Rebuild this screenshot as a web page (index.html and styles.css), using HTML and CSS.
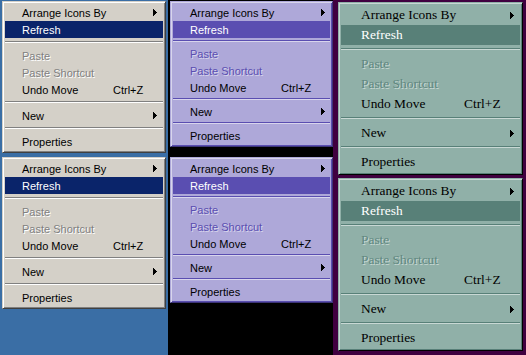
FILE: index.html
```html
<!DOCTYPE html>
<html>
<head>
<meta charset="utf-8">
<link rel="stylesheet" href="styles.css">
</head>
<body>
<div class="desk">
  <div class="col col-std">
    <div class="menu">
      <div class="item"><span class="lbl">Arrange Icons By</span><svg class="arrow" width="4" height="7" viewBox="0 0 4 7"><path d="M0 0h1v7H0zM1 1h1v5H1zM2 2h1v3H2zM3 3h1v1H3z"/></svg></div>
      <div class="item hl"><span class="lbl">Refresh</span></div>
      <div class="sep"></div>
      <div class="item dis"><span class="lbl">Paste</span></div>
      <div class="item dis"><span class="lbl">Paste Shortcut</span></div>
      <div class="item"><span class="lbl">Undo Move</span><span class="key">Ctrl+Z</span></div>
      <div class="sep"></div>
      <div class="item"><span class="lbl">New</span><svg class="arrow" width="4" height="7" viewBox="0 0 4 7"><path d="M0 0h1v7H0zM1 1h1v5H1zM2 2h1v3H2zM3 3h1v1H3z"/></svg></div>
      <div class="sep"></div>
      <div class="item"><span class="lbl">Properties</span></div>
    </div>
    <div class="menu">
      <div class="item"><span class="lbl">Arrange Icons By</span><svg class="arrow" width="4" height="7" viewBox="0 0 4 7"><path d="M0 0h1v7H0zM1 1h1v5H1zM2 2h1v3H2zM3 3h1v1H3z"/></svg></div>
      <div class="item hl"><span class="lbl">Refresh</span></div>
      <div class="sep"></div>
      <div class="item dis"><span class="lbl">Paste</span></div>
      <div class="item dis"><span class="lbl">Paste Shortcut</span></div>
      <div class="item"><span class="lbl">Undo Move</span><span class="key">Ctrl+Z</span></div>
      <div class="sep"></div>
      <div class="item"><span class="lbl">New</span><svg class="arrow" width="4" height="7" viewBox="0 0 4 7"><path d="M0 0h1v7H0zM1 1h1v5H1zM2 2h1v3H2zM3 3h1v1H3z"/></svg></div>
      <div class="sep"></div>
      <div class="item"><span class="lbl">Properties</span></div>
    </div>
  </div>
  <div class="col col-lilac">
    <div class="menu">
      <div class="item"><span class="lbl">Arrange Icons By</span><svg class="arrow" width="4" height="7" viewBox="0 0 4 7"><path d="M0 0h1v7H0zM1 1h1v5H1zM2 2h1v3H2zM3 3h1v1H3z"/></svg></div>
      <div class="item hl"><span class="lbl">Refresh</span></div>
      <div class="sep"></div>
      <div class="item dis"><span class="lbl">Paste</span></div>
      <div class="item dis"><span class="lbl">Paste Shortcut</span></div>
      <div class="item"><span class="lbl">Undo Move</span><span class="key">Ctrl+Z</span></div>
      <div class="sep"></div>
      <div class="item"><span class="lbl">New</span><svg class="arrow" width="4" height="7" viewBox="0 0 4 7"><path d="M0 0h1v7H0zM1 1h1v5H1zM2 2h1v3H2zM3 3h1v1H3z"/></svg></div>
      <div class="sep"></div>
      <div class="item"><span class="lbl">Properties</span></div>
    </div>
    <div class="menu">
      <div class="item"><span class="lbl">Arrange Icons By</span><svg class="arrow" width="4" height="7" viewBox="0 0 4 7"><path d="M0 0h1v7H0zM1 1h1v5H1zM2 2h1v3H2zM3 3h1v1H3z"/></svg></div>
      <div class="item hl"><span class="lbl">Refresh</span></div>
      <div class="sep"></div>
      <div class="item dis"><span class="lbl">Paste</span></div>
      <div class="item dis"><span class="lbl">Paste Shortcut</span></div>
      <div class="item"><span class="lbl">Undo Move</span><span class="key">Ctrl+Z</span></div>
      <div class="sep"></div>
      <div class="item"><span class="lbl">New</span><svg class="arrow" width="4" height="7" viewBox="0 0 4 7"><path d="M0 0h1v7H0zM1 1h1v5H1zM2 2h1v3H2zM3 3h1v1H3z"/></svg></div>
      <div class="sep"></div>
      <div class="item"><span class="lbl">Properties</span></div>
    </div>
  </div>
  <div class="col col-egg">
    <div class="menu">
      <div class="item"><span class="lbl">Arrange Icons By</span><svg class="arrow" width="4" height="7" viewBox="0 0 4 7"><path d="M0 0h1v7H0zM1 1h1v5H1zM2 2h1v3H2zM3 3h1v1H3z"/></svg></div>
      <div class="item hl"><span class="lbl">Refresh</span></div>
      <div class="sep"></div>
      <div class="item dis"><span class="lbl">Paste</span></div>
      <div class="item dis"><span class="lbl">Paste Shortcut</span></div>
      <div class="item"><span class="lbl">Undo Move</span><span class="key">Ctrl+Z</span></div>
      <div class="sep"></div>
      <div class="item"><span class="lbl">New</span><svg class="arrow" width="4" height="7" viewBox="0 0 4 7"><path d="M0 0h1v7H0zM1 1h1v5H1zM2 2h1v3H2zM3 3h1v1H3z"/></svg></div>
      <div class="sep"></div>
      <div class="item"><span class="lbl">Properties</span></div>
    </div>
    <div class="menu">
      <div class="item"><span class="lbl">Arrange Icons By</span><svg class="arrow" width="4" height="7" viewBox="0 0 4 7"><path d="M0 0h1v7H0zM1 1h1v5H1zM2 2h1v3H2zM3 3h1v1H3z"/></svg></div>
      <div class="item hl"><span class="lbl">Refresh</span></div>
      <div class="sep"></div>
      <div class="item dis"><span class="lbl">Paste</span></div>
      <div class="item dis"><span class="lbl">Paste Shortcut</span></div>
      <div class="item"><span class="lbl">Undo Move</span><span class="key">Ctrl+Z</span></div>
      <div class="sep"></div>
      <div class="item"><span class="lbl">New</span><svg class="arrow" width="4" height="7" viewBox="0 0 4 7"><path d="M0 0h1v7H0zM1 1h1v5H1zM2 2h1v3H2zM3 3h1v1H3z"/></svg></div>
      <div class="sep"></div>
      <div class="item"><span class="lbl">Properties</span></div>
    </div>
  </div>
</div>
</body>
</html>
```
FILE: styles.css
```css
html, body {
  margin: 0;
  padding: 0;
  background: #000;
}
.desk {
  display: flex;
  width: 526px;
  height: 355px;
  overflow: hidden;
}
.col {
  display: flex;
  flex-direction: column;
  align-items: flex-start;
}
.menu {
  box-sizing: border-box;
  border: 1px solid;
  padding: 2px;
  display: flex;
  flex-direction: column;
}
.item {
  display: flex;
  align-items: center;
  white-space: nowrap;
}
.lbl {
  flex: none;
}
.key {
  flex: none;
}
.arrow {
  display: block;
  margin-left: auto;
  flex: none;
}
.sep {
  box-sizing: border-box;
}

/* ---------- Windows Standard ---------- */
.col-std {
  width: 168px;
  background: #3a6ea5;
  padding-top: 1px;
  gap: 4px;
}
.col-std .menu {
  margin-left: 2px;
  width: 164px;
  background: #d4d0c8;
  border-color: #d4d0c8 #404040 #404040 #d4d0c8;
  box-shadow: inset 1px 1px 0 #fff, inset -1px -1px 0 #808080;
  font: 11px "Liberation Sans", Arial, sans-serif;
  color: #000;
}
.col-std .item {
  height: 17px;
  padding-left: 17px;
  padding-right: 6px;
}
.col-std .lbl { width: 91px; }
.col-std .item.hl { background: #0a246a; color: #fff; }
.col-std .item.dis { color: #808080; text-shadow: 1px 1px 0 #fff; }
.col-std .sep {
  height: 9px;
  padding-top: 3px;
}
.col-std .sep::before {
  content: "";
  display: block;
  height: 1px;
  background: #808080;
  border-bottom: 1px solid #fff;
}

/* ---------- Lilac ---------- */
.col-lilac {
  width: 165px;
  background: #000;
  padding-top: 1px;
  gap: 10px;
}
.col-lilac .menu {
  margin-left: 2px;
  width: 163px;
  background: #aea8d9;
  border-color: #aea8d9 #3c3478 #3c3478 #aea8d9;
  box-shadow: inset 1px 1px 0 #d8d5ec, inset -1px -1px 0 #5a4eb1;
  font: 11px "Liberation Sans", Arial, sans-serif;
  color: #000;
}
.col-lilac .item {
  height: 17px;
  padding-left: 17px;
  padding-right: 5px;
}
.col-lilac .lbl { width: 91px; }
.col-lilac .item.hl { background: #5a4eb1; color: #fff; }
.col-lilac .item.dis { color: #5a4eb1; text-shadow: 1px 1px 0 #d8d5ec; }
.col-lilac .sep {
  height: 7px;
  padding-top: 2px;
}
.col-lilac .sep::before {
  content: "";
  display: block;
  height: 1px;
  background: #5a4eb1;
  border-bottom: 1px solid #d8d5ec;
}

/* ---------- Eggplant ---------- */
.col-egg {
  flex: 1;
  background: #400040;
  padding-top: 2px;
  gap: 3px;
}
.col-egg .menu {
  margin-left: 5px;
  width: 185px;
  background: #90b0a8;
  border-color: #90b0a8 #000 #000 #90b0a8;
  box-shadow: inset 1px 1px 0 #c8d8d4, inset -1px -1px 0 #587f78;
  font: 13.4px "Liberation Serif", "Times New Roman", serif;
  color: #000;
}
.col-egg .item {
  height: 20px;
  padding-left: 20px;
  padding-right: 6px;
}
.col-egg .lbl { width: 103px; }
.col-egg .item.hl { background: #588078; color: #fff; }
.col-egg .item.dis { color: #5f877f; text-shadow: 1px 1px 0 #c8d8d4; }
.col-egg .sep {
  height: 9px;
  padding-top: 3px;
}
.col-egg .sep::before {
  content: "";
  display: block;
  height: 1px;
  background: #588078;
  border-bottom: 1px solid #c8d8d4;
}
```
